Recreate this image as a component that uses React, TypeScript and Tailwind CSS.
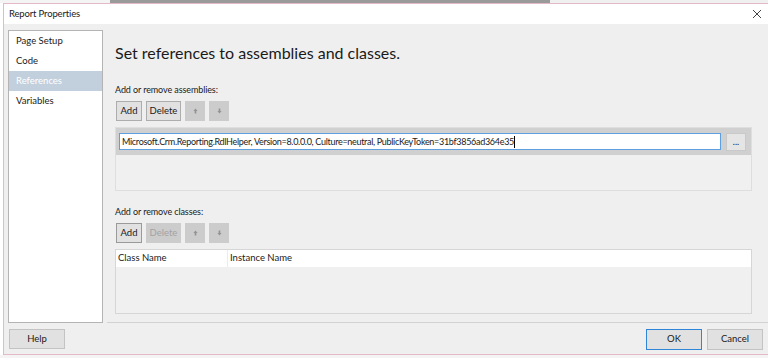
// Report Properties dialog (References page)
const font = { fontFamily: 'Lato, "Noto Sans", sans-serif' }

function Btn({ label, disabled, strong }: { label: React.ReactNode; disabled?: boolean; strong?: boolean }) {
  return (
    <div
      className={
        "h-[20px] flex items-center justify-center text-[9.5px] border " +
        (disabled
          ? "bg-[#cccccc] border-[#cccccc] text-[#a3a3a3]"
          : strong
          ? "bg-[#e1e1e1] border-[#9a9a9a] text-[#1a1a1a]"
          : "bg-[#e1e1e1] border-[#adadad] text-[#1a1a1a]")
      }
    >
      {label}
    </div>
  )
}

function Arrow({ up }: { up?: boolean }) {
  return (
    <svg width="5" height="6" viewBox="0 0 6 7" className={up ? "" : "rotate-180"}>
      <path d="M3 0.5 L5.5 3.5 H4 V6.5 H2 V3.5 H0.5 Z" fill="#939393" />
    </svg>
  )
}

function ButtonRow({ deleteDisabled }: { deleteDisabled?: boolean }) {
  return (
    <div className="flex gap-[4px] pl-[1px]">
      <div className="w-[26px]">
        <Btn label="Add" strong={deleteDisabled} />
      </div>
      <div className="w-[35px]">
        <Btn label="Delete" disabled={deleteDisabled} />
      </div>
      <div className="w-[20px]">
        <Btn label={<Arrow up />} disabled />
      </div>
      <div className="w-[20px]">
        <Btn label={<Arrow />} disabled />
      </div>
    </div>
  )
}

export default function App() {
  return (
    <div className="w-[768px] h-[358px] bg-white flex flex-col overflow-hidden text-[#1a1a1a]" style={font}>
      {/* window behind */}
      <div className="h-[3px] flex">
        <div className="w-[110px] bg-[#f4f4f4]" />
        <div className="w-[440px] bg-[#9a9a9a]" />
        <div className="flex-1 bg-[#f0f0f0]" />
      </div>

      <div className="flex-1 ml-[3px] border-l border-t border-b border-[#e3b9c6] flex flex-col">
        {/* title bar */}
        <div className="h-[20px] bg-white flex items-center justify-between pl-[5px] pr-[6px]">
          <span className="text-[9.5px] tracking-[-0.15px]">Report Properties</span>
          <svg width="10" height="10" viewBox="0 0 10 10">
            <path d="M1 1 L9 9 M9 1 L1 9" stroke="#444" strokeWidth="1" />
          </svg>
        </div>

        {/* body */}
        <div className="flex-1 bg-[#efefef] flex flex-col pt-[6px]">
          <div className="flex h-[293px]">
            {/* nav */}
            <div className="ml-[4px] w-[95px] bg-white border border-[#b4b4b4]">
              {["Page Setup", "Code", "References", "Variables"].map((t) => (
                <div
                  key={t}
                  className={
                    "h-[20px] flex items-center pl-[7px] text-[9.5px] " +
                    (t === "References" ? "bg-[#c2cfdd] text-white" : "")
                  }
                >
                  {t}
                </div>
              ))}
            </div>

            {/* content */}
            <div className="flex-1 ml-[4px] border-b border-[#d2d2d2] flex flex-col pl-[8px] pr-[16px]">
              <div className="mt-[11px] h-[24px] leading-[24px] text-[16px]">Set references to assemblies and classes.</div>

              <div className="mt-[17px] h-[16px] leading-[16px] text-[9px] tracking-[-0.1px]">Add or remove assemblies:</div>
              <div className="mt-[3px]">
                <ButtonRow />
              </div>

              <div className="mt-[6px] h-[64px] border border-[#dedede] flex flex-col">
                <div className="h-[27px] bg-[#d0d0d0] flex items-center px-[3px] gap-[5px]">
                  <div className="flex-1 h-[17px] bg-white border border-[#5d9fe0] flex items-center pl-[2px] text-[9px] tracking-[-0.3px] whitespace-nowrap overflow-hidden">
                    Microsoft.Crm.Reporting.RdlHelper, Version=8.0.0.0, Culture=neutral, PublicKeyToken=31bf3856ad364e35
                    <span className="inline-block w-px h-[12px] bg-black" />
                  </div>
                  <div className="w-[20px] h-[18px] bg-[#e5e5e5] border border-[#c9c9c9] flex items-end justify-center pb-[4px] text-[9px] leading-none mr-[2px]">
                    ...
                  </div>
                </div>
                <div className="flex-1 bg-[#f0f0f0]" />
              </div>

              <div className="mt-[13px] h-[16px] leading-[16px] text-[9px] tracking-[-0.1px]">Add or remove classes:</div>
              <div className="mt-[3px]">
                <ButtonRow deleteDisabled />
              </div>

              <div className="mt-[6px] h-[65px] border border-[#d6d6d6] flex flex-col">
                <div className="h-[17px] bg-white flex text-[9.5px]">
                  <div className="w-[112px] pl-[2px] flex items-center border-r border-[#ececec]">Class Name</div>
                  <div className="pl-[2px] flex items-center">Instance Name</div>
                </div>
                <div className="flex-1 bg-[#f0f0f0]" />
              </div>
            </div>
          </div>

          {/* footer buttons */}
          <div className="mt-[6px] flex items-start px-[5px]">
            <div className="w-[56px] h-[20px] bg-[#e1e1e1] border border-[#c3c3c3] flex items-center justify-center text-[9.5px]">
              Help
            </div>
            <div className="flex-1" />
            <div className="w-[56px] h-[21px] bg-[#e1e1e1] border border-[#2f86d9] flex items-center justify-center text-[9.5px]">
              OK
            </div>
            <div className="ml-[5px] w-[56px] h-[21px] bg-[#e1e1e1] border border-[#c3c3c3] flex items-center justify-center text-[9.5px]">
              Cancel
            </div>
          </div>
        </div>
      </div>

      <div className="h-[3px] flex">
        <div className="flex-1 bg-[#f4f4f4]" />
      </div>
    </div>
  )
}
